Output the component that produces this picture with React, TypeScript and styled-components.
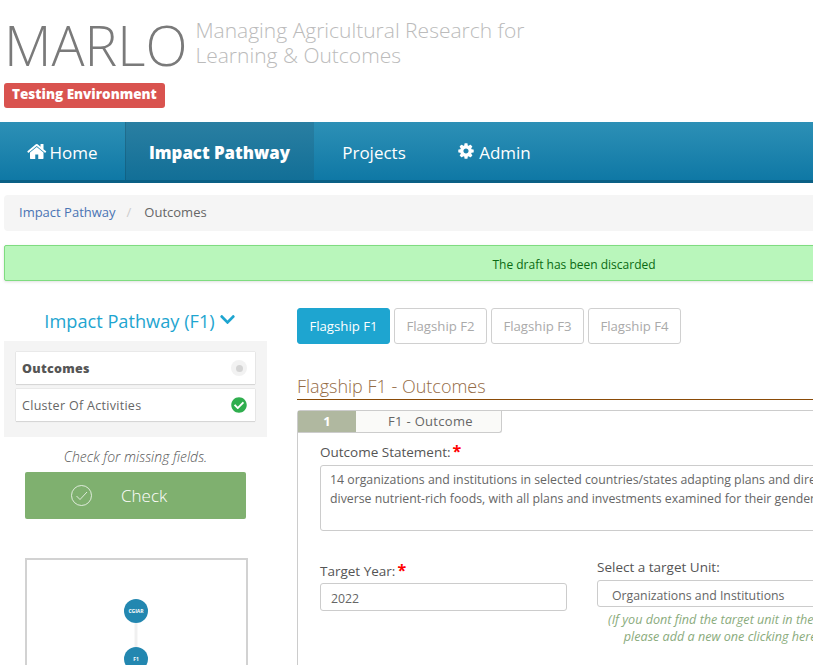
import React from 'react'
import styled, { createGlobalStyle } from 'styled-components'
import { FaChevronDown, FaCheckCircle } from 'react-icons/fa'

const GlobalStyle = createGlobalStyle`
  html, body {
    margin: 0;
    padding: 0;
    height: 665px;
    overflow: hidden;
    background: #fff;
    font-family: "Open Sans", "Liberation Sans", sans-serif;
    color: #555;
  }
  * { box-sizing: border-box; }
`

const Page = styled.div`
  width: 1144px;
  padding-left: 4px;
`

const Header = styled.header`
  height: 122px;
  padding-top: 14px;
`

const BrandRow = styled.div`
  display: flex;
  align-items: flex-start;
  height: 68px;
`

const Logo = styled.div`
  font-size: 55px;
  font-weight: 300;
  line-height: 62px;
  color: #7a7a7a;
`

const Tagline = styled.div`
  margin: 4px 0 0 8px;
  font-size: 21px;
  font-weight: 300;
  line-height: 25px;
  color: #bbb;
`

const Badge = styled.span`
  display: inline-block;
  height: 25px;
  padding: 0 8px;
  border-radius: 3px;
  background: #d9534f;
  color: #fff;
  font-size: 13.5px;
  font-weight: 800;
  line-height: 23px;
`

const Nav = styled.nav`
  display: flex;
  height: 61px;
  margin-left: -4px;
  background: linear-gradient(#2d90b6, #0f78a5);
  border-bottom: 3px solid #0b6085;
`

const NavItem = styled.a<{ $active?: boolean; $width: number; $gap?: number }>`
  display: flex;
  align-items: center;
  justify-content: center;
  gap: ${p => p.$gap ?? 0}px;
  width: ${p => p.$width}px;
  padding-top: 2px;
  color: #fff;
  font-size: ${p => (p.$active ? 16.8 : 17)}px;
  font-weight: ${p => (p.$active ? 800 : 400)};
  background: ${p => (p.$active ? 'linear-gradient(#2a7fa2, #126f97)' : 'transparent')};
  box-shadow: ${p => (p.$active ? 'inset 1px 0 0 rgba(0, 0, 0, 0.12)' : 'none')};
`

const NavIcon = styled.svg`
  flex: none;
  fill: #fff;
  margin-top: -2px;
`

const Breadcrumb = styled.div`
  display: flex;
  align-items: center;
  height: 36px;
  margin-top: 12px;
  padding: 0 0 2px 15px;
  border-radius: 4px;
  background: #f5f5f5;
  font-size: 13px;
`

const CrumbLink = styled.a`
  color: #4a74b4;
`

const CrumbSep = styled.span`
  margin: 0 13px 0 11px;
  color: #ccc;
`

const CrumbCurrent = styled.span`
  color: #666;
`

const Alert = styled.div`
  height: 36px;
  margin-top: 14px;
  border: 1px solid #7fdc80;
  border-radius: 2px;
  background: #b9f6bb;
  box-shadow: 0 1px 3px rgba(0, 0, 0, 0.12);
  color: #0a6a12;
  font-size: 12px;
  line-height: 38px;
  text-align: center;
`

const Columns = styled.div`
  display: flex;
  margin-top: 27px;
`

const Sidebar = styled.aside`
  flex: none;
  width: 263px;
`

const SideTitle = styled.h3`
  display: flex;
  align-items: center;
  justify-content: center;
  gap: 4px;
  height: 27px;
  margin: 0 0 6px;
  padding: 0 0 2px 9px;
  color: #1ea5d0;
  font-size: 18.2px;
  font-weight: 400;
  svg { font-size: 17px; margin-top: -2px; }
`

const MenuPanel = styled.div`
  display: flex;
  flex-direction: column;
  gap: 5px;
  height: 96px;
  padding: 11px 12px;
  background: #f4f4f4;
`

const MenuItem = styled.div<{ $active?: boolean }>`
  display: flex;
  align-items: center;
  justify-content: space-between;
  height: 32px;
  padding: 0 8px 0 6px;
  background: #fff;
  box-shadow: 0 0 1px rgba(0, 0, 0, 0.25), 0 1px 1px rgba(0, 0, 0, 0.08);
  font-size: 12.5px;
  font-weight: ${p => (p.$active ? 800 : 400)};
  letter-spacing: 0.3px;
  color: ${p => (p.$active ? '#555' : '#666')};
`

const PendingDot = styled.span`
  display: flex;
  align-items: center;
  justify-content: center;
  width: 16px;
  height: 16px;
  border-radius: 50%;
  background: #f2f2f2;
  &::after {
    content: '';
    width: 7px;
    height: 7px;
    border-radius: 50%;
    background: #d4d4d4;
  }
`

const DoneIcon = styled(FaCheckCircle)`
  color: #2fae4e;
  font-size: 16px;
`

const CheckNote = styled.div`
  margin-top: 11px;
  height: 18px;
  font-size: 14px;
  font-style: italic;
  font-weight: 300;
  line-height: 18px;
  text-align: center;
  color: #555;
`

const CheckButton = styled.div`
  display: flex;
  align-items: center;
  width: 221px;
  height: 47px;
  margin: 6px 0 0 21px;
  padding-left: 46px;
  gap: 29px;
  border-radius: 2px;
  background: #7fb06f;
  color: #fff;
  font-size: 17px;
  font-weight: 300;
`

const GraphBox = styled.div`
  width: 223px;
  height: 160px;
  margin: 39px 0 0 21px;
  padding-top: 1px;
  border: 2px solid #d2d2d2;
`

const Main = styled.main`
  flex: 1;
  margin-left: 30px;
`

const Tabs = styled.div`
  display: flex;
  gap: 4px;
`

const TabButton = styled.div<{ $active?: boolean }>`
  width: 93px;
  height: 36px;
  border: 1px solid ${p => (p.$active ? '#1ea5d0' : '#d0d0d0')};
  border-radius: 3px;
  background: ${p => (p.$active ? '#1ea5d0' : '#fff')};
  color: ${p => (p.$active ? '#fff' : '#aaa')};
  font-size: 13.2px;
  font-weight: ${p => (p.$active ? 500 : 400)};
  line-height: 34px;
  text-align: center;
`

const SectionTitle = styled.h3`
  height: 26px;
  margin: 30px 0 10px;
  border-bottom: 1px solid #8a4b08;
  color: #946b45;
  font-size: 18px;
  font-weight: 300;
  line-height: 24px;
`

const OutcomeCard = styled.section`
  height: 300px;
  border: 1px solid #ccc;
  border-radius: 3px 0 0 0;
`

const CardTab = styled.div`
  display: flex;
  width: 204px;
  height: 22px;
  border-right: 1px solid #ccc;
  border-bottom: 1px solid #ccc;
  border-radius: 0 0 3px 0;
  background: #fafaf8;
  font-size: 13px;
  line-height: 21px;
`

const CardNumber = styled.span`
  width: 58px;
  background: #b0b8a0;
  color: #fff;
  font-weight: 700;
  text-align: center;
`

const CardTabLabel = styled.span`
  flex: 1;
  padding-left: 4px;
  color: #666;
  text-align: center;
  letter-spacing: 0.3px;
`

const CardBody = styled.div`
  padding: 9px 0 0 22px;
`

const Label = styled.label`
  display: block;
  height: 20px;
  color: #555;
  font-size: 13.5px;
  font-weight: 500;
  line-height: 20px;
`

const Required = styled.span`
  margin-left: 2px;
  color: #f00;
  font-size: 16px;
  font-weight: 700;
  line-height: 14px;
`

const TextArea = styled.div`
  width: 1000px;
  height: 66px;
  margin-top: 3px;
  padding: 4px 9px;
  border: 1px solid #ccc;
  border-radius: 3px;
  color: #666;
  font-size: 12.3px;
  line-height: 19px;
  white-space: nowrap;
`

const FieldRow = styled.div`
  display: flex;
  gap: 30px;
  margin-top: 30px;
`

const FieldColumn = styled.div<{ $offset: number }>`
  flex: none;
  width: ${p => (p.$offset ? 250 : 247)}px;
  margin-top: ${p => p.$offset}px;
`

const Input = styled.div`
  height: 28px;
  margin-top: 2px;
  padding-left: 10px;
  border: 1px solid #ccc;
  border-radius: 3px;
  color: #666;
  font-size: 12.3px;
  line-height: 29px;
`

const SelectBox = styled.div`
  width: 400px;
  height: 27px;
  margin-top: 3px;
  padding-left: 14px;
  border: 1px solid #ccc;
  border-radius: 3px;
  color: #666;
  font-size: 12.3px;
  line-height: 29px;
`

const Help = styled.div`
  margin-top: 4px;
  color: #8aab7c;
  font-size: 12.6px;
  font-style: italic;
  line-height: 17px;
  text-align: center;
  white-space: nowrap;
`

const tabs = ['Flagship F1', 'Flagship F2', 'Flagship F3', 'Flagship F4']

export default function App() {
  return (
    <Page>
      <GlobalStyle />
      <Header>
        <BrandRow>
          <Logo>MARLO</Logo>
          <Tagline>
            Managing Agricultural Research for
            <br />
            Learning &amp; Outcomes
          </Tagline>
        </BrandRow>
        <Badge>Testing Environment</Badge>
      </Header>
      <Nav>
        <NavItem $width={125} $gap={1}>
          <NavIcon width="21" height="21" viewBox="0 0 1792 1792">
            <path d="M1408 992v480q0 26-19 45t-45 19h-384v-384h-256v384h-384q-26 0-45-19t-19-45v-480q0-1 .5-3t.5-3l575-474 575 474q1 2 1 6zm223-69l-62 74q-8 9-21 11h-3q-13 0-21-7l-692-577-692 577q-12 8-24 7-13-2-21-11l-62-74q-8-10-7-23.5t11-21.5l719-599q32-26 76-26t76 26l244 204v-195q0-14 9-23t23-9h192q14 0 23 9t9 23v408l219 182q10 8 11 21.5t-7 23.5z" />
          </NavIcon>
          Home
        </NavItem>
        <NavItem $width={189} $active>Impact Pathway</NavItem>
        <NavItem $width={120}>Projects</NavItem>
        <NavItem $width={120} $gap={4}>
          <NavIcon width="18" height="18" viewBox="0 0 1792 1792">
            <path d="M1152 896q0-106-75-181t-181-75-181 75-75 181 75 181 181 75 181-75 75-181zm512-109v222q0 12-8 23t-20 13l-185 28q-19 54-39 91 35 50 107 138 10 12 10 25t-9 23q-27 37-99 108t-94 71q-12 0-26-9l-138-108q-44 23-91 38-16 136-29 186-7 28-36 28h-222q-14 0-24.5-8.5t-11.5-21.5l-28-184q-49-16-90-37l-141 107q-10 9-25 9-14 0-25-11-126-114-165-168-7-10-7-23 0-12 8-23 15-21 51-66.5t54-70.5q-27-50-41-99l-183-27q-13-2-21-12.5t-8-23.5v-222q0-12 8-23t19-13l186-28q14-46 39-92-40-57-107-138-10-12-10-24 0-10 9-23 26-36 98.5-107.5t94.5-71.5q13 0 26 10l138 107q44-23 91-38 16-136 29-186 7-28 36-28h222q14 0 24.5 8.5t11.5 21.5l28 184q49 16 90 37l142-107q9-9 24-9 13 0 25 10 129 119 165 170 7 8 7 22 0 12-8 23-15 21-51 66.5t-54 70.5q26 50 41 98l183 28q13 2 21 12.5t8 23.5z" />
          </NavIcon>
          Admin
        </NavItem>
      </Nav>
      <Breadcrumb>
        <CrumbLink>Impact Pathway</CrumbLink>
        <CrumbSep>/</CrumbSep>
        <CrumbCurrent>Outcomes</CrumbCurrent>
      </Breadcrumb>
      <Alert>The draft has been discarded</Alert>
      <Columns>
        <Sidebar>
          <SideTitle>Impact Pathway (F1) <FaChevronDown /></SideTitle>
          <MenuPanel>
            <MenuItem $active>Outcomes <PendingDot /></MenuItem>
            <MenuItem>Cluster Of Activities <DoneIcon /></MenuItem>
          </MenuPanel>
          <CheckNote>Check for missing fields.</CheckNote>
          <CheckButton>
            <svg width="21" height="21" viewBox="0 0 21 21" fill="none" stroke="#fff" strokeOpacity="0.75" strokeWidth="1">
              <circle cx="10.5" cy="10.5" r="10" />
              <path d="M5.5 11l3.5 3.5 7-7.5" />
            </svg>
            Check
          </CheckButton>
          <GraphBox>
            <svg width="219" height="156" viewBox="0 0 219 156">
              <line x1="109" y1="50" x2="109" y2="98" stroke="#f0f0f0" strokeWidth="3" />
              <circle cx="109" cy="50" r="12" fill="#2387b0" />
              <text x="109" y="52" fontSize="5" fontWeight="700" fill="#fff" textAnchor="middle">CGIAR</text>
              <circle cx="109" cy="98" r="12" fill="#2387b0" />
              <text x="109" y="100" fontSize="5" fontWeight="700" fill="#fff" textAnchor="middle">F1</text>
            </svg>
          </GraphBox>
        </Sidebar>
        <Main>
          <Tabs>
            {tabs.map((t, i) => (
              <TabButton key={t} $active={i === 0}>{t}</TabButton>
            ))}
          </Tabs>
          <SectionTitle>Flagship F1 - Outcomes</SectionTitle>
          <OutcomeCard>
            <CardTab>
              <CardNumber>1</CardNumber>
              <CardTabLabel>F1 - Outcome</CardTabLabel>
            </CardTab>
            <CardBody>
              <Label>Outcome Statement:<Required>*</Required></Label>
              <TextArea>
                14 organizations and institutions in selected countries/states adapting plans and directing investment
                <br />
                diverse nutrient-rich foods, with all plans and investments examined for their gender and youth implications
              </TextArea>
              <FieldRow>
                <FieldColumn $offset={0}>
                  <Label>Target Year:<Required>*</Required></Label>
                  <Input>2022</Input>
                </FieldColumn>
                <FieldColumn $offset={-4}>
                  <Label>Select a target Unit:</Label>
                  <SelectBox>Organizations and Institutions</SelectBox>
                  <Help>
                    (If you dont find the target unit in the list,
                    <br />
                    please add a new one clicking here)
                  </Help>
                </FieldColumn>
              </FieldRow>
            </CardBody>
          </OutcomeCard>
        </Main>
      </Columns>
    </Page>
  )
}
